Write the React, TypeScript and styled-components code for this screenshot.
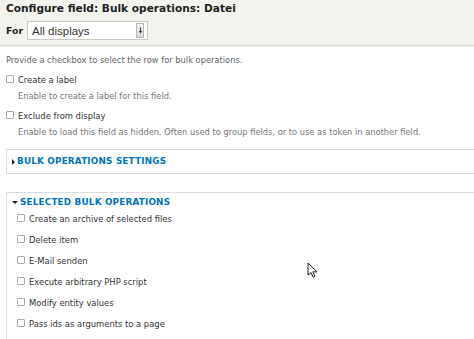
import styled, { createGlobalStyle } from 'styled-components'

const GlobalStyle = createGlobalStyle`
  html, body {
    margin: 0;
    padding: 0;
    background: #fff;
    overflow: hidden;
  }
  body {
    font-family: "DejaVu Sans", Verdana, sans-serif;
    color: #333;
  }
`

const operations = [
  'Create an archive of selected files',
  'Delete item',
  'E-Mail senden',
  'Execute arbitrary PHP script',
  'Modify entity values',
  'Pass ids as arguments to a page',
]

export default function App() {
  return (
    <Page>
      <GlobalStyle />
      <Header>
        <Title>Configure field: Bulk operations: Datei</Title>
        <ForRow>
          <ForLabel>For</ForLabel>
          <Select>
            <span>All displays</span>
            <SelectArrow>
              <svg width="5" height="7" viewBox="0 0 5 7">
                <path d="M2.5 0.5 V5" stroke="#333" strokeWidth="1" />
                <path d="M0.8 4 L2.5 6.5 L4.2 4 Z" fill="#333" />
              </svg>
            </SelectArrow>
          </Select>
        </ForRow>
      </Header>

      <Content>
        <Description>Provide a checkbox to select the row for bulk operations.</Description>

        <FormItem>
          <CheckRow>
            <Checkbox type="checkbox" />
            <CheckLabel>Create a label</CheckLabel>
          </CheckRow>
          <ItemHelp>Enable to create a label for this field.</ItemHelp>
        </FormItem>

        <FormItem>
          <CheckRow>
            <Checkbox type="checkbox" />
            <CheckLabel>Exclude from display</CheckLabel>
          </CheckRow>
          <ItemHelp>
            Enable to load this field as hidden. Often used to group fields, or to use as token in another field.
          </ItemHelp>
        </FormItem>

        <Fieldset>
          <Legend>
            <Triangle open={false} />
            BULK OPERATIONS SETTINGS
          </Legend>
        </Fieldset>

        <Fieldset open>
          <Legend>
            <Triangle open />
            SELECTED BULK OPERATIONS
          </Legend>
          <OpsList>
            {operations.map((op) => (
              <OpRow key={op}>
                <Checkbox type="checkbox" />
                <CheckLabel>{op}</CheckLabel>
              </OpRow>
            ))}
          </OpsList>
        </Fieldset>
      </Content>

      <Cursor width="12" height="17" viewBox="0 0 12 17">
        <path
          d="M1 1 L1 13 L4 10.5 L6.2 15.2 L8 14.4 L5.9 9.8 L10 9.8 Z"
          fill="#fff"
          stroke="#222"
          strokeWidth="1"
          strokeLinejoin="round"
        />
      </Cursor>
    </Page>
  )
}

const Page = styled.div`
  position: relative;
  width: 474px;
  height: 339px;
  overflow: hidden;
`

const Header = styled.div`
  background: #f3f3ee;
  border-bottom: 1px solid #dcdcd6;
  box-shadow: 0 1px 0 #ecece8;
  padding: 1px 6px 5px;
`

const Title = styled.h1`
  margin: 0;
  font-size: 10.6px;
  font-weight: bold;
  color: #222;
  line-height: 15px;
`

const ForRow = styled.div`
  display: flex;
  align-items: center;
  gap: 4px;
  margin-top: 5px;
`

const ForLabel = styled.span`
  font-size: 9.4px;
  font-weight: bold;
  color: #222;
`

const Select = styled.div`
  display: flex;
  align-items: center;
  justify-content: space-between;
  width: 121px;
  height: 19px;
  box-sizing: border-box;
  border: 1px solid #c8c8c4;
  background: #fff;
  padding: 0 3px 0 4px;
  font-family: "Liberation Sans", Arial, sans-serif;
  font-size: 11.5px;
  color: #333;
`

const SelectArrow = styled.span`
  display: flex;
  align-items: center;
  justify-content: center;
  width: 6px;
  height: 13px;
  background: linear-gradient(#f4f4f4, #d8d8d8);
  border: 1px solid #b8b8b8;
`

const Content = styled.div`
  padding: 9px 0 0 6px;
`

const Description = styled.div`
  font-size: 8.3px;
  color: #666;
  line-height: 10px;
  margin-bottom: 9px;
`

const FormItem = styled.div`
  margin-bottom: 9px;
`

const CheckRow = styled.label`
  display: flex;
  align-items: center;
  gap: 4px;
  height: 11px;
`

const Checkbox = styled.input`
  appearance: none;
  margin: 0 0 2px;
  width: 8px;
  height: 8px;
  border: 1px solid #aaa;
  border-radius: 1px;
  background: #fff;
  box-sizing: border-box;
  flex-shrink: 0;
`

const CheckLabel = styled.span`
  font-size: 8.4px;
  color: #333;
`

const ItemHelp = styled.div`
  font-size: 8.3px;
  color: #777;
  margin: 6px 0 0 12px;
  line-height: 10px;
  white-space: nowrap;
`

const Fieldset = styled.div<{ open?: boolean }>`
  border: 1px solid #ddd;
  border-right: none;
  margin-top: 12px;
  margin-bottom: 18px;
  padding: ${(p) => (p.open ? '4px 0 12px 5px' : '6px 0 6px 5px')};
`

const Legend = styled.div`
  display: flex;
  align-items: center;
  gap: 2px;
  font-size: 8.8px;
  font-weight: bold;
  letter-spacing: 0.2px;
  color: #0074bd;
  line-height: 11px;
`

const Triangle = styled.span<{ open: boolean }>`
  width: 0;
  height: 0;
  ${(p) =>
    p.open
      ? `border-left: 3px solid transparent;
         border-right: 3px solid transparent;
         border-top: 3px solid #222;`
      : `border-top: 3px solid transparent;
         border-bottom: 3px solid transparent;
         border-left: 3px solid #222;`}
`

const OpsList = styled.div`
  display: flex;
  flex-direction: column;
  gap: 10px;
  padding: 5px 0 0 5px;
`

const OpRow = styled.label`
  display: flex;
  align-items: center;
  gap: 4px;
  height: 11px;
`

const Cursor = styled.svg`
  position: absolute;
  left: 307px;
  top: 262px;
`
